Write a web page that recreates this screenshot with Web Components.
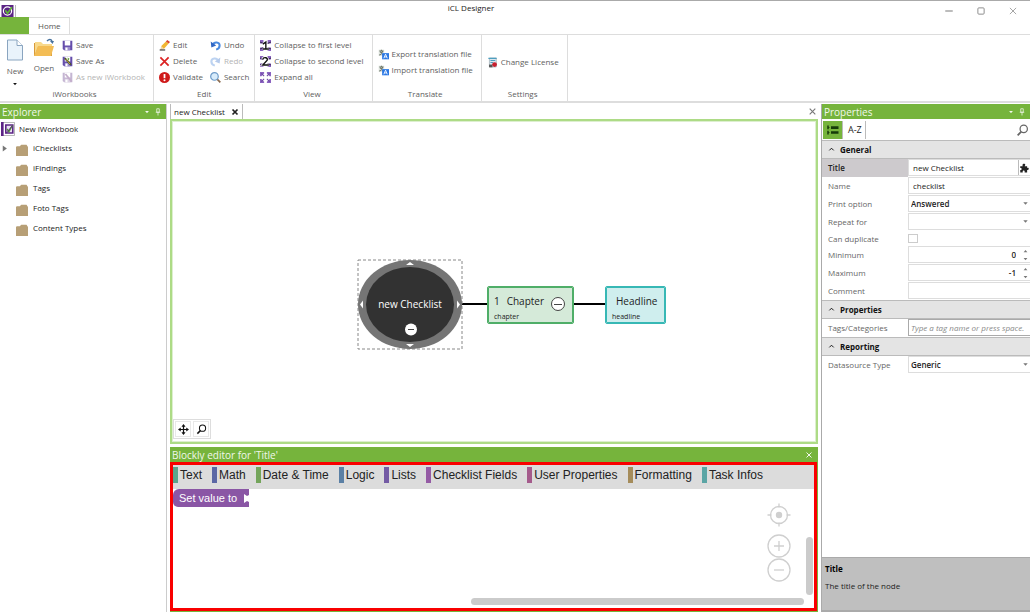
<!DOCTYPE html>
<html lang="en">
<head>
<meta charset="utf-8">
<title>iCL Designer</title>
<style>
  html, body { height: 100%; margin: 0; }
  body { font: 8px/12px "Open Sans", "Noto Sans", sans-serif; color: #222; background: #fff; overflow: hidden; }
</style>
</head>
<body>
<app-shell></app-shell>
<script>
const define = (name, html, setup) => {
  const tpl = document.createElement('template');
  tpl.innerHTML = `<style>
    *, *::before, *::after { box-sizing: border-box; }
    button, input, select { font: inherit; color: inherit; background: none; border: 0; margin: 0; padding: 0; border-radius: 0; outline: 0; }
    svg { display: block; }
  </style>` + html;
  customElements.define(name, class extends HTMLElement {
    constructor() { super(); this.attachShadow({ mode: 'open' }).append(tpl.content.cloneNode(true)); }
    connectedCallback() { if (setup && !this.ready) { this.ready = true; setup(this, this.shadowRoot); } }
  });
};

/* ---------- icons ---------- */
const floppy = (c, d) => `<path fill="${c}" d="M1 1h14v14H3l-2-2z"/><path fill="#fff" d="M4 1h8v7H4z"/><path fill="${d}" d="M4 10h8v5H4z"/><path fill="#fff" d="M5 11h3v4H5z"/>`;
const corners = s => `<path fill="#8b63c0" d="M0 0h5v5H0zM11 0h5v5h-5zM0 11h5v5H0zM11 11h5v5h-5z"/><path d="M0 3l5 2M16 3l-5 2M0 13l5-2M16 13l-5-2" stroke="#3b2a55" stroke-width="1.500"/>${s}`;
const translate = `<path fill="#dfe4df" d="M1 1h8v9H1z"/><path d="M2 3h6M5 1v2M7 3C6 6 4 8 2 9M3 4l5 5" stroke="#6c7568" stroke-width="1.500" fill="none"/><path fill="#2b78e4" d="M6 6h10v9H6z"/><path d="M8.500 13.500 11 7.500l2.500 6M9.500 11.500h3" stroke="#fff" stroke-width="1.300" fill="none"/>`;
const ICONS = {
  logo: `<path fill="#5b2385" d="M0 0h16v16H0z"/><circle cx="8" cy="8" r="5.500" fill="none" stroke="#fff" stroke-width="1.600"/><path d="M5 7l3 4 6-8" fill="none" stroke="#5fb336" stroke-width="2.200"/>`,
  workbook: `<path fill="#fff" stroke="#aaa" d="M.5.5h15v15H.5z"/><path fill="#5b2385" d="M0 0h3v16H0z"/><path d="M5.500 3.500h8v9h-8z" fill="#e9dff2" stroke="#5b2385" stroke-width="1.800"/><path d="M7 8l2 3 4-7" fill="none" stroke="#4f9a35" stroke-width="1.700"/><path d="M6 13l7-9" stroke="#5b2385"/>`,
  newdoc: `<path fill="#e9f3fb" stroke="#8aa5c0" d="M.5 1h9.500l5.500 5.500V21H.5z"/><path fill="#fff" stroke="#8aa5c0" d="M10 1v5.500h5.500"/>`,
  openfolder: `<path fill="#d79a3b" d="M1 6h7l2 2h9v11H1z"/><path fill="#f8d98c" d="M2 5h6l2 2h9v3H5L2 18z"/><path fill="#f3bd55" d="M5 9h16l-3 10H1z"/><path d="M14 4c2-2 4-2 5 0" fill="none" stroke="#47729e" stroke-width="1.500"/><path fill="#47729e" d="M17 4h4l-1.500 3z"/>`,
  save: floppy('#654dab', '#9a8bcc'),
  saveas: floppy('#654dab', '#9a8bcc') + `<path d="M4 3l9 10" stroke="#33402a" stroke-width="2.500"/><path d="M5 4l7 8" stroke="#e0c13c" stroke-width="1.300"/><path fill="#63a03c" d="M8 2l3 2-2 3z"/>`,
  saveoff: `<g opacity=".5">${floppy('#8d6fa8', '#bba6cb')}<path d="M5 3l9 11" stroke="#8a5f98" stroke-width="2.500"/></g>`,
  pencil: `<path fill="#f2b632" d="M3 9l7-7 4 3-7 8z"/><path fill="#d8452e" d="M10 2l2-2 4 3-2 2z"/><path fill="#eed5aa" d="M3 9l4 4-5 2z"/><path d="M1 14.500h8" stroke="#333" stroke-width="1.600"/>`,
  cross: `<path d="M2 2l12 12M14 2L2 14" stroke="#dc2323" stroke-width="2.500"/>`,
  alert: `<circle cx="8" cy="8" r="8" fill="#cf1b1b"/><path d="M8 3v6" stroke="#fff" stroke-width="2.600"/><circle cx="8" cy="12" r="1.500" fill="#fff"/>`,
  undo: `<path d="M4 7c2-5 10-4 10 1 0 3-2 5-5 6" fill="none" stroke="#4a8ae0" stroke-width="3"/><path fill="#2f66c4" d="M1 2l1 9 7-3z"/>`,
  redo: `<g opacity=".4"><path d="M12 7C10 2 2 3 2 8c0 3 2 5 5 6" fill="none" stroke="#5b92dd" stroke-width="3"/><path fill="#4a80d0" d="M15 2l-1 9-7-3z"/></g>`,
  lens: `<path d="M10 10l5 5" stroke="#8a6a4f" stroke-width="2.500"/><circle cx="6.500" cy="6.500" r="5.500" fill="#d8ecfb" stroke="#6f9cc9" stroke-width="1.800"/>`,
  level1: corners(`<path d="M4 6.500l4.500-3.500v10M4 13h9" fill="none" stroke="#fff" stroke-width="4"/><path d="M4 6l4.500-3v10M4 13h9" fill="none" stroke="#111" stroke-width="2"/>`),
  level2: corners(`<path d="M4 5c1-4 8-3 6.500 1L4 13h9" fill="none" stroke="#fff" stroke-width="4"/><path d="M4 5c1-4 8-3 6.500 1L4 13h9" fill="none" stroke="#111" stroke-width="2"/>`),
  expand: `<path fill="#8b63c0" d="M0 0h6v2L2 6H0zM10 0h6v6h-2l-4-4zM0 10h2l4 4v2H0zM14 10h2v6h-6v-2z"/><path d="M2 2l4 4M14 2l-4 4M2 14l4-4M14 14l-4-4" stroke="#6b459f" stroke-width="1.500"/>`,
  translate,
  license: `<path fill="#dbe8ef" stroke="#9aabb5" d="M3.500 1.500h10v13h-10z"/><path d="M2 2h12M5 5h7M5 8h4" stroke="#4d9fc0" stroke-width="1.500"/><path fill="#555" d="M3 11h5v4H3z"/><circle cx="11" cy="11" r="3.500" fill="#c8202f"/>`,
  pin: `<path d="M5.500 1.500h5v7h-5zM3.500 8.500h9M8 9v6" fill="none" stroke="#fff" stroke-width="1.500"/>`,
  caret: `<path fill="currentColor" d="M3 5h10l-5 6z"/>`,
  up: `<path d="M3 10l5-5 5 5" fill="none" stroke="currentColor" stroke-width="2.200"/>`,
  x: `<path d="M3 3l10 10M13 3L3 13" stroke="currentColor" stroke-width="2" fill="none"/>`,
  xbold: `<path d="M3 3l10 10M13 3L3 13" stroke="currentColor" stroke-width="3.500" fill="none"/>`,
  xthin: `<path d="M3 3l10 10M13 3L3 13" stroke="currentColor" stroke-width="1.200" fill="none"/>`,
  min: `<path d="M2 8h12" stroke="currentColor" stroke-width="1.800"/>`,
  max: `<rect x="3" y="3" width="10" height="10" rx="1.500" fill="none" stroke="currentColor" stroke-width="1.500"/>`,
  folder: `<path fill="#b79f76" d="M0 4l1-1h4l2-2h7l2 3v12H0z"/>`,
  twist: `<path fill="#777" d="M2 0l11 8-11 8z"/>`,
  list: `<path fill="#163a08" d="M1 2h2v2h1v1H3v2H1zM1 9h2v2h1v1H3v2H1zM6 3h10v3.500H6zM6 9.500h10V13H6z"/>`,
  find: `<circle cx="9.500" cy="6" r="4.500" fill="none" stroke="currentColor" stroke-width="1.500"/><path d="M6.500 9.500L2 14" stroke="currentColor" stroke-width="2.200"/>`,
  puzzle: `<path fill="#222" d="M2 5h4C4 1 10 0 10 3l-1 2h4v3c3-2 4 4 0 3v4H9c1-4-4-4-3 0H2v-4c3 1 3-4 0-3z"/>`,
  move: `<path d="M8 2v12M2 8h12" stroke="#111" stroke-width="1.800"/><path fill="#111" d="M8 0l3 4H5zM8 16l3-4H5zM0 8l4-3v6zM16 8l-4-3v6z"/>`,
  target: `<g fill="none" stroke="#cfcfcf" stroke-width="1.300"><circle cx="12" cy="12" r="8.500"/><path d="M12 .5v4M12 19.500v4M.5 12h4M19.500 12h4"/></g><circle cx="12" cy="12" r="3.200" fill="#cfcfcf"/>`,
  plus: `<g fill="none" stroke="#cfcfcf" stroke-width="1.300"><circle cx="12" cy="12" r="11"/><path d="M12 7v10M7 12h10"/></g>`,
  minus: `<g fill="none" stroke="#cfcfcf" stroke-width="1.300"><circle cx="12" cy="12" r="11"/><path d="M7 12h10"/></g>`,
};
const BOX = { newdoc: '0 0 16 22', openfolder: '0 0 22 22', target: '0 0 24 24', plus: '0 0 24 24', minus: '0 0 24 24' };
define('ui-icon', `<style>
  :host { display: block; flex: none; width: var(--w, 10px); height: var(--h, 10px); }
  svg { width: 100%; height: 100%; }
</style><svg aria-hidden="true"></svg>`, (el, root) => {
  const n = el.getAttribute('name'), s = root.querySelector('svg');
  s.setAttribute('viewBox', BOX[n] || '0 0 16 16');
  s.innerHTML = ICONS[n];
});

/* ---------- title bar ---------- */
define('title-bar', `<style>
  :host { display: grid; grid-template-columns: 1fr auto 1fr; align-items: start; height: 17px; border-top: 1px solid #aaa; }
  .logo { --w: 13px; --h: 12px; align-self: end; width: 16px; overflow: hidden; border-right: 1px solid #bbb; }
  h1 { margin: 0; font-size: 8px; font-weight: 400; line-height: 14px; padding-right: 88px; }
  div { display: flex; justify-content: flex-end; gap: 22px; padding: 5px 12px 0 0; color: #888; }
  button { display: block; }
</style>
<ui-icon class="logo" name="logo"></ui-icon>
<h1>iCL Designer</h1>
<div><button aria-label="Minimize"><ui-icon name="min"></ui-icon></button><button aria-label="Maximize"><ui-icon name="max"></ui-icon></button><button aria-label="Close"><ui-icon name="xthin"></ui-icon></button></div>`);

/* ---------- ribbon ---------- */
define('ribbon-button', `<style>
  :host { display: block; color: #5e5e5e; --w: 11px; --h: 11px; }
  button { display: flex; align-items: center; gap: 3px; height: 16px; white-space: nowrap; }
  :host([off]) { color: #b4b4b4; }
  :host([big]) button { flex-direction: column; gap: 3px; height: auto; }
  :host([menu]) button { gap: 4px; }
  :host([big]) { --w: 22px; --h: 22px; }
  ui-icon.more { --w: 6px; --h: 6px; color: #111; }
  :host(:not([menu])) .more { display: none; }
</style><button><ui-icon class="main"></ui-icon><span><slot></slot></span><ui-icon class="more" name="caret"></ui-icon></button>`,
(el, root) => {
  const i = document.createElement('ui-icon'), old = root.querySelector('.main'), b = root.querySelector('button');
  i.setAttribute('name', el.getAttribute('icon'));
  old.replaceWith(i);
  if (el.hasAttribute('off')) { b.disabled = true; b.style.color = 'inherit'; }
});
define('ribbon-group', `<style>
  :host { display: flex; flex-direction: column; border-right: 1px solid #ddd; padding: 2px 8px 0 5px; }
  .body { flex: 1; display: flex; gap: var(--gap, 7px); align-items: flex-start; }
  :host([middle]) .body { align-items: center; }
  h2 { margin: 0; font-size: 8px; font-weight: 400; line-height: 14px; text-align: center; color: #5e5e5e; }
</style><div class="body"><slot></slot></div><h2></h2>`,
(el, root) => root.querySelector('h2').textContent = el.getAttribute('label'));
define('ribbon-bar', `<style>
  :host { display: block; }
  nav { display: flex; height: 17px; }
  .file { width: 29px; background: #76b43c; }
  .home { padding: 0 8px 1px 9px; line-height: 16px; color: #555; border: solid #ddd; border-width: 1px 1px 0 0; }
  .groups { display: flex; height: 69px; border-top: 1px solid #ddd; border-bottom: 2px solid #ddd; }
  .col { display: flex; flex-direction: column; }
  .first { padding-left: 4px; }
  .edit { padding-right: 5px; }
</style>
<nav><button class="file" aria-label="File"></button><button class="home">Home</button></nav>
<div class="groups">
  <ribbon-group class="first" label="iWorkbooks">
    <ribbon-button big menu icon="newdoc" style="padding-top:2px">New</ribbon-button>
    <ribbon-button big icon="openfolder">Open</ribbon-button>
    <div class="col"><ribbon-button icon="save">Save</ribbon-button><ribbon-button icon="saveas">Save As</ribbon-button><ribbon-button off icon="saveoff">As new iWorkbook</ribbon-button></div>
  </ribbon-group>
  <ribbon-group class="edit" label="Edit">
    <div class="col"><ribbon-button icon="pencil">Edit</ribbon-button><ribbon-button icon="cross">Delete</ribbon-button><ribbon-button icon="alert">Validate</ribbon-button></div>
    <div class="col"><ribbon-button icon="undo">Undo</ribbon-button><ribbon-button off icon="redo">Redo</ribbon-button><ribbon-button icon="lens">Search</ribbon-button></div>
  </ribbon-group>
  <ribbon-group label="View">
    <div class="col"><ribbon-button icon="level1">Collapse to first level</ribbon-button><ribbon-button icon="level2">Collapse to second level</ribbon-button><ribbon-button icon="expand">Expand all</ribbon-button></div>
  </ribbon-group>
  <ribbon-group middle label="Translate">
    <div class="col"><ribbon-button icon="translate">Export translation file</ribbon-button><ribbon-button icon="translate">Import translation file</ribbon-button></div>
  </ribbon-group>
  <ribbon-group middle label="Settings"><ribbon-button icon="license">Change License</ribbon-button></ribbon-group>
</div>`);

/* ---------- panels ---------- */
define('panel-header', `<style>
  :host { display: flex; align-items: center; height: 15px; padding: 1px 4px 0 2px; background: #76b43c; color: #fff; }
  h2 { flex: 1; margin: 0; font-size: 10px; font-weight: 400; line-height: 14px; white-space: nowrap; opacity: .9; }
  button { display: block; margin-left: 4px; opacity: .9; }
  ui-icon { --w: 8px; --h: 8px; }
  :host([closable]) .dock, :host(:not([closable])) .close { display: none; }
</style><h2><slot></slot></h2>
<button class="dock" aria-label="Options"><ui-icon name="caret" style="--w:6px;--h:6px"></ui-icon></button><button class="dock" aria-label="Pin"><ui-icon name="pin"></ui-icon></button>
<button class="close" aria-label="Close"><ui-icon name="x"></ui-icon></button>`);

define('tree-item', `<style>
  :host { display: flex; align-items: center; height: 20px; padding-left: 2px; }
  .twist { --w: 6px; --h: 7px; margin-right: 7px; visibility: hidden; }
  :host([expandable]) .twist { visibility: visible; }
  .folder { --w: 14px; --h: 12px; margin-right: 4px; align-self: end; margin-bottom: 2px; }
</style><ui-icon class="twist" name="twist"></ui-icon><ui-icon class="folder" name="folder"></ui-icon><span><slot></slot></span>`);
define('explorer-panel', `<style>
  :host { display: block; border-right: 1px solid #ccc; }
  .root { display: flex; align-items: center; gap: 4px; height: 19px; padding-left: 1px; --w: 14px; --h: 14px; }
</style><panel-header>Explorer</panel-header>
<div class="root"><ui-icon name="workbook"></ui-icon>New iWorkbook</div>
<tree-item expandable>iChecklists</tree-item><tree-item>iFindings</tree-item><tree-item>Tags</tree-item><tree-item>Foto Tags</tree-item><tree-item>Content Types</tree-item>`);

/* ---------- diagram ---------- */
define('diagram-node', `<style>
  :host { position: absolute; display: flex; flex-direction: column; justify-content: space-between; border: 1px solid var(--line); outline: 1px solid var(--line); outline-offset: -2px; border-radius: 2px; background: var(--fill); padding: 7px 8px 1px 6px; }
  .top { display: flex; align-items: center; justify-content: space-between; font-size: 10px; line-height: 14px; white-space: nowrap; }
  small { font-size: 7px; line-height: 10px; }
</style><div class="top"><slot></slot></div><small><slot name="id"></slot></small>`);
define('diagram-canvas', `<style>
  :host { display: block; position: relative; border: 2px solid #addb86; outline: 1px solid #ddefcf; outline-offset: -3px; min-height: 0; overflow: hidden; }
  .links { position: absolute; left: 0; top: 0; width: 100%; height: 100%; }
  .root { position: absolute; left: 185px; top: 138px; width: 106px; height: 91px; color: #fff; font-size: 10px; display: grid; place-items: center; }
  .root svg { position: absolute; inset: 0; }
  .root span { position: relative; line-height: 14px; padding-bottom: 2px; }
  .chapter { left: 315px; top: 165px; width: 87px; height: 38px; --line: #4fae68; --fill: #d5ead9; }
  .headline { left: 433px; top: 165px; width: 61px; height: 38px; --line: #37b8b5; --fill: #cfeeee; }
  .headline span:first-child { padding-left: 4px; }
  .tog { width: 14px; height: 14px; border: 1px solid #444; border-radius: 50%; background: #fff; position: relative; top: 3px; display: grid; place-items: center; }
  .tog::before { content: ""; width: 8px; height: 1px; background: #444; }
  .tools { position: absolute; left: 1px; bottom: 3px; display: flex; gap: 2px; border: 1px solid #ddd; padding: 1px; background: #fff; }
  .tools button { width: 16px; height: 16px; display: grid; place-items: center; border: 1px solid #e8e8e8; --w: 11px; --h: 11px; }
</style>
<svg class="links" aria-hidden="true"><path d="M287 183h30M401 183h34" stroke="#000" stroke-width="2"/></svg>
<div class="root">
  <svg width="106" height="91" viewBox="0 0 106 91"><rect x="1" y="1" width="104" height="89" fill="none" stroke="#888" stroke-dasharray="3 2"/><ellipse cx="53" cy="45.500" rx="52" ry="44.500" fill="#757575"/><ellipse cx="53" cy="45.500" rx="44" ry="37.500" fill="#323232"/><path fill="#fff" d="M53 3l4 3h-8zM53 88l4-3h-8zM3 45.500l3-4v8zM103 45.500l-3-4v8z"/><circle cx="54" cy="70.500" r="6" fill="#fff"/><path d="M51 70.500h6" stroke="#444"/></svg>
  <span>new Checklist</span>
</div>
<diagram-node class="chapter"><span>1</span><span>Chapter</span><button class="tog" aria-label="Collapse"></button><span slot="id">chapter</span></diagram-node>
<diagram-node class="headline"><span>Headline</span><span slot="id">headline</span></diagram-node>
<div class="tools"><button aria-label="Pan"><ui-icon name="move"></ui-icon></button><button aria-label="Zoom" style="color:#111"><ui-icon name="find"></ui-icon></button></div>`);

define('document-area', `<style>
  :host { display: grid; grid-template-rows: 15px minmax(0, 1fr); min-height: 0; }
  .tabs { display: flex; justify-content: space-between; padding-right: 1px; }
  .tab { display: flex; align-items: center; gap: 6px; padding: 1px 3px 0; border: solid #bbb; border-width: 0 1px; }
  button { display: block; --w: 8px; --h: 8px; color: #222; }
  .closeall { color: #777; --w: 9px; --h: 9px; }
</style><div class="tabs"><div class="tab"><span>new Checklist</span><button aria-label="Close tab"><ui-icon name="xbold"></ui-icon></button></div><button class="closeall" aria-label="Close document"><ui-icon name="x"></ui-icon></button></div>
<diagram-canvas></diagram-canvas>`);

/* ---------- blockly ---------- */
define('block-category', `<style>
  :host { display: block; }
  button { display: flex; align-items: center; gap: 2px; height: 16px; font: 12px/16px "Liberation Sans", Arial, sans-serif; white-space: nowrap; color: #222; }
  button::before { content: ""; width: 5px; height: 16px; background: var(--c); }
</style><button><slot></slot></button>`);
define('blockly-editor', `<style>
  :host { display: grid; grid-template-rows: 15px minmax(0, 1fr); min-height: 0; border: solid #76b43c; border-width: 0 1px 1px 0; }
  .frame { border: 3px solid #f90000; display: flex; flex-direction: column; min-height: 0; }
  .cats { display: flex; gap: 10px; height: 24px; padding-top: 2px; background: #dcdcdc; }
  .work { flex: 1; position: relative; min-height: 0; }
  .block { display: flex; width: 76px; height: 18px; color: #fff; font: 11px/18px "Liberation Sans", Arial, sans-serif; }
  .block span { flex: 1; padding-left: 6px; background: #8a56a5; border-radius: 6px 0 0 5px; white-space: nowrap; }
  .block svg { flex: none; }
  .zoom { position: absolute; right: 23px; top: 14px; display: flex; flex-direction: column; --w: 24px; --h: 24px; }
  .zoom button { display: block; }
  .zoom button:first-child { margin-bottom: 7px; }
  .v, .h { position: absolute; background: #cbcbcb; border-radius: 4px; }
  .v { right: 1px; bottom: 13px; width: 7px; height: 58px; }
  .h { right: 10px; bottom: 3px; width: 52%; height: 7px; }
</style>
<panel-header closable>Blockly editor for 'Title'</panel-header>
<div class="frame">
  <div class="cats">
    <block-category style="--c:#5ba58c">Text</block-category><block-category style="--c:#5b67a5">Math</block-category><block-category style="--c:#74a55b">Date &amp; Time</block-category><block-category style="--c:#5b80a5">Logic</block-category><block-category style="--c:#745ba5">Lists</block-category><block-category style="--c:#955ba5">Checklist Fields</block-category><block-category style="--c:#a55b8c">User Properties</block-category><block-category style="--c:#a58c5b">Formatting</block-category><block-category style="--c:#5ba5a5">Task Infos</block-category>
  </div>
  <div class="work">
    <div class="block"><span>Set value to</span><svg width="7" height="18" viewBox="0 0 7 18"><path fill="#8a56a5" d="M0 0h7v6L5 7 2 5v9l3-2 2 1v5H0z"/></svg></div>
    <div class="zoom"><button aria-label="Center"><ui-icon name="target"></ui-icon></button><button aria-label="Zoom in"><ui-icon name="plus"></ui-icon></button><button aria-label="Zoom out"><ui-icon name="minus"></ui-icon></button></div>
    <div class="v"></div><div class="h"></div>
  </div>
</div>`);

/* ---------- properties ---------- */
define('property-section', `<style>
  :host { display: block; }
  h3 { display: flex; align-items: center; gap: 5px; height: 19px; margin: 0; padding-left: 6px; font-size: 8px; font-weight: 700; background: #e4e4e4; border: solid #bbb; border-width: 1px 0; color: #111; --w: 7px; --h: 7px; }
</style><h3><ui-icon name="up"></ui-icon><span></span></h3><slot></slot>`,
(el, root) => root.querySelector('span').textContent = el.getAttribute('label'));
define('property-row', `<style>
  :host { display: grid; grid-template-columns: 86px minmax(0, 1fr); height: 18px; }
  label { line-height: 18px; padding-left: 6px; color: #666; }
  :host([selected]) label { background: #cdcacd; color: #222; font-weight: 600; }
  .field { display: flex; align-items: center; border: solid #ddd; border-width: 1px 0 1px 1px; margin-bottom: 1px; min-width: 0; --w: 7px; --h: 7px; color: #222; }
  input, select { flex: 1; min-width: 0; width: 100%; height: 14px; padding: 0 4px; appearance: none; -moz-appearance: textfield; }
  select { padding: 0 2px; font-weight: 600; }
  .field ui-icon { color: #777; margin-right: 1px; }
  input[type=number] { text-align: right; font-weight: 600; padding: 0 6px; }
  input::-webkit-inner-spin-button { display: none; }
  .spin { display: flex; flex-direction: column; gap: 2px; --w: 7px; --h: 6px; }
  .spin button { display: block; }
  .spin button:first-child { transform: scaleY(-1); }
  :host([type=checkbox]) { height: 15px; }
  :host([type=checkbox]) label { line-height: 15px; }
  :host([type=checkbox]) .field { border: 0; }
  input[type=checkbox] { flex: none; width: 9px; height: 9px; border: 1px solid #ccc; }
  :host([type=tag]) .field { border-color: #aaa; }
  input::placeholder { color: #888; opacity: 1; font-style: italic; }
  :host([type=tag]) input { padding: 0 0 0 2px; }
  .piece { display: grid; place-items: center; width: 12px; height: 15px; border-left: 1px solid #bbb; --w: 10px; --h: 10px; }
</style><label for="f"></label><div class="field"></div>`,
(el, root) => {
  const type = el.getAttribute('type') || 'text', v = el.getAttribute('value') || '';
  root.querySelector('label').textContent = el.getAttribute('label');
  root.querySelector('.field').innerHTML = {
    text: `<input id="f" type="text" value="${v}">`,
    tag: `<input id="f" type="text" placeholder="Type a tag name or press space.">`,
    select: `<select id="f"><option>${v}</option></select><ui-icon name="caret"></ui-icon>`,
    number: `<input id="f" type="number" value="${v}"><span class="spin"><button aria-label="Increase"><ui-icon name="caret"></ui-icon></button><button aria-label="Decrease"><ui-icon name="caret"></ui-icon></button></span>`,
    checkbox: `<input id="f" type="checkbox">`,
  }[type] + (el.hasAttribute('selected') ? '<button class="piece" aria-label="Edit expression"><ui-icon name="puzzle"></ui-icon></button>' : '');
});
define('properties-panel', `<style>
  :host { display: flex; flex-direction: column; border-left: 1px solid #aaa; min-height: 0; }
  .bar { display: flex; align-items: center; height: 21px; padding: 2px 1px 1px; gap: 2px; }
  .bar button { height: 18px; display: grid; place-items: center; border-right: 1px solid #bbb; }
  .cat { width: 20px; background: #76b43c; --w: 13px; --h: 12px; }
  .az { padding: 0 3px; font-size: 9px; }
  .bar input { flex: 1; min-width: 0; height: 18px; }
  .bar ui-icon.find { --w: 13px; --h: 13px; color: #666; }
  .grid { flex: 1; }
  .help { height: 55px; background: #bfbfbf; border: solid #aaa; border-width: 1px 0 2px; padding: 4px 3px; color: #222; }
  .help b { display: block; line-height: 13px; color: #000; }
  .help p { margin: 5px 0 0; line-height: 12px; }
</style>
<panel-header>Properties</panel-header>
<div class="bar"><button class="cat" aria-label="Categorized"><ui-icon name="list"></ui-icon></button><button class="az">A-Z</button><input type="text" aria-label="Search properties"><ui-icon class="find" name="find"></ui-icon></div>
<div class="grid">
<property-section label="General">
  <property-row label="Title" value="new Checklist" selected></property-row>
  <property-row label="Name" value="checklist"></property-row>
  <property-row label="Print option" type="select" value="Answered"></property-row>
  <property-row label="Repeat for" type="select"></property-row>
  <property-row label="Can duplicate" type="checkbox"></property-row>
  <property-row label="Minimum" type="number" value="0"></property-row>
  <property-row label="Maximum" type="number" value="-1"></property-row>
  <property-row label="Comment"></property-row>
</property-section>
<property-section label="Properties"><property-row label="Tags/Categories" type="tag"></property-row></property-section>
<property-section label="Reporting"><property-row label="Datasource Type" type="select" value="Generic"></property-row></property-section>
</div>
<div class="help"><b>Title</b><p>The title of the node</p></div>`);

/* ---------- shell ---------- */
define('app-shell', `<style>
  :host { display: flex; flex-direction: column; height: 100vh; }
  main { flex: 1; min-height: 0; display: grid; grid-template-columns: 167px minmax(0, 1fr) 209px; gap: 3px; padding-top: 1px; }
  .center { display: grid; grid-template-rows: minmax(0, 1fr) 165px; gap: 3px; min-height: 0; }
</style>
<title-bar></title-bar><ribbon-bar></ribbon-bar>
<main><explorer-panel></explorer-panel><div class="center"><document-area></document-area><blockly-editor></blockly-editor></div><properties-panel></properties-panel></main>`);
</script>
</body>
</html>
